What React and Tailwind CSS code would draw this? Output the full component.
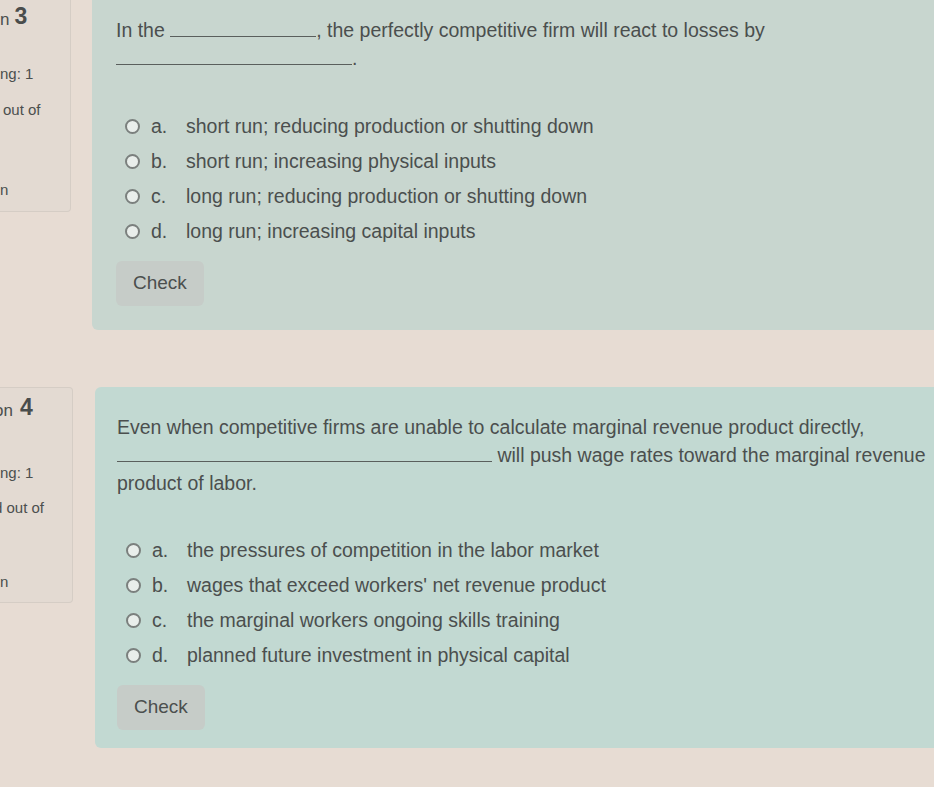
import React from 'react';

const q3 = [
  { k: 'a.', t: 'short run; reducing production or shutting down' },
  { k: 'b.', t: 'short run; increasing physical inputs' },
  { k: 'c.', t: 'long run; reducing production or shutting down' },
  { k: 'd.', t: 'long run; increasing capital inputs' },
];

const q4 = [
  { k: 'a.', t: 'the pressures of competition in the labor market' },
  { k: 'b.', t: "wages that exceed workers' net revenue product" },
  { k: 'c.', t: 'the marginal workers ongoing skills training' },
  { k: 'd.', t: 'planned future investment in physical capital' },
];

function Blank({ w }) {
  return <span className={`inline-block h-[1em] border-b border-[#5a5f5d] ${w}`}></span>;
}

function Options({ items }) {
  return (
    <div className="flex flex-col">
      {items.map((o) => (
        <label key={o.k} className="flex items-center h-[35px] pl-[9px]">
          <span className="w-[15px] h-[15px] rounded-full border-2 border-[#7b807e] bg-[#e9eeeb]"></span>
          <span className="ml-[11px] w-[35px]">{o.k}</span>
          <span>{o.t}</span>
        </label>
      ))}
    </div>
  );
}

function CheckBtn() {
  return (
    <button className="mt-[12px] w-[88px] h-[45px] rounded-md bg-[#c6ccc8] text-[#4b4f4e] text-[19px] text-left pl-[17px]">
      Check
    </button>
  );
}

export default function App() {
  return (
    <div
      className="w-[934px] h-[787px] overflow-hidden bg-[#e7dcd3] text-[#4b4f4e]"
      style={{ fontFamily: '"Liberation Sans", Arial, sans-serif' }}
    >
      {/* question 3 */}
      <div className="flex mt-[-12px]">
        <div className="w-[71px] h-[224px] shrink-0 bg-[#e3dad2] border border-[#d5cdc5] border-l-0 rounded-br-sm text-[15px] leading-none">
          <div className="pt-[16px] flex items-end">
            <span className="text-[17px]">n</span>
            <span className="ml-[5px] text-[23px] font-bold text-[#4a4d4c]">3</span>
          </div>
          <div className="mt-[38px]">ng: 1</div>
          <div className="mt-[21px] pl-[3px]">out of</div>
          <div className="mt-[65px]">n</div>
        </div>
        <div className="ml-[21px] flex-1 mr-[-30px] h-[342px] rounded-md bg-[#c8d6cf] pl-[24px] pt-[28px] text-[19.5px]">
          <div className="leading-[28px] whitespace-nowrap">
            <div>
              In the <Blank w="w-[146px]" />, the perfectly competitive firm will react to losses by
            </div>
            <div>
              <Blank w="w-[236px]" />.
            </div>
          </div>
          <div className="mt-[37px]">
            <Options items={q3} />
          </div>
          <CheckBtn />
        </div>
      </div>

      {/* question 4 */}
      <div className="flex mt-[57px]">
        <div className="w-[73px] h-[216px] shrink-0 bg-[#e3dad2] border border-[#d5cdc5] border-l-0 rounded-r-sm text-[15px] leading-none overflow-hidden">
          <div className="pt-[8px] flex items-end ml-[-6px]">
            <span className="text-[17px]">on</span>
            <span className="ml-[7px] text-[23px] font-bold text-[#4a4d4c]">4</span>
          </div>
          <div className="mt-[46px]">ng: 1</div>
          <div className="mt-[20px] ml-[-6px] whitespace-nowrap">d out of</div>
          <div className="mt-[59px]">n</div>
        </div>
        <div className="ml-[22px] flex-1 mr-[-30px] h-[361px] rounded-md bg-[#c2d9d2] pl-[22px] pt-[26px] text-[19.5px]">
          <div className="leading-[28px] whitespace-nowrap">
            <div>Even when competitive firms are unable to calculate marginal revenue product directly,</div>
            <div>
              <Blank w="w-[375px]" /> will push wage rates toward the marginal revenue
            </div>
            <div>product of labor.</div>
          </div>
          <div className="mt-[36px]">
            <Options items={q4} />
          </div>
          <CheckBtn />
        </div>
      </div>
    </div>
  );
}
